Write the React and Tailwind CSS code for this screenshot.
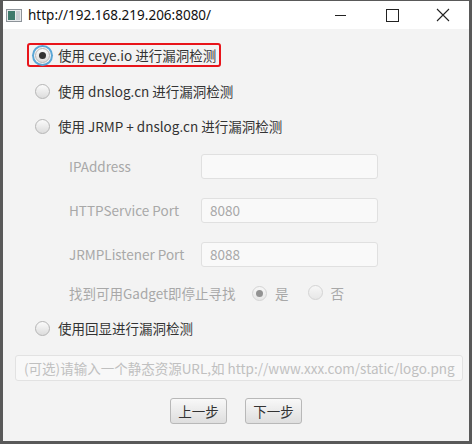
import React from "react";

const font = { fontFamily: '"Noto Sans CJK SC", sans-serif' };

function Radio({ checked, focused, dim }) {
  return (
    <span className={`relative inline-flex items-center justify-center w-[17px] h-[17px] rounded-full shrink-0 ${focused ? "ring-[2px] ring-[#5aa6d6]" : ""} ${dim ? "opacity-50" : ""}`}>
      <span className="w-[15px] h-[15px] rounded-full border border-[#b5b5b5] bg-gradient-to-b from-[#fbfbfb] to-[#dcdcdc] flex items-center justify-center">
        {checked && <span className="w-[7px] h-[7px] rounded-full bg-[#333]" />}
      </span>
    </span>
  );
}

function Field({ label, value }) {
  return (
    <div className="flex items-center h-[25px]">
      <span className="w-[132px] text-[13.5px] text-[#a8a8a8]">{label}</span>
      <div className="w-[177px] h-[25px] rounded-[3px] border border-[#e0e0e0] bg-[#f9f9f9] px-[8px] flex items-center text-[13.5px] text-[#a8a8a8]">
        {value}
      </div>
    </div>
  );
}

export default function App() {
  return (
    <div className="w-[474px] h-[447px] bg-white" style={font}>
      <div className="w-[472px] h-[444px] border-x-[3px] border-t border-b-[3px] border-[#595959] flex flex-col">
        {/* Title bar */}
        <div className="h-[28px] bg-white flex items-center shrink-0">
          <svg width="16" height="13" viewBox="0 0 16 13" className="ml-[3px]">
            <rect x="0.5" y="0.5" width="15" height="12" fill="#e8eaec" stroke="#8d9399" />
            <rect x="2" y="2" width="7" height="9" fill="#3f7a6c" />
            <rect x="10" y="2" width="4" height="9" fill="#c9ced3" />
          </svg>
          <span className="ml-[6px] text-[13.5px] text-[#111]" style={{ fontFamily: '"Noto Sans", sans-serif' }}>http://192.168.219.206:8080/</span>
          <div className="ml-auto flex items-center">
            <svg width="50" height="28" viewBox="0 0 50 28"><line x1="18" y1="14.5" x2="29" y2="14.5" stroke="#222" strokeWidth="1" /></svg>
            <svg width="50" height="28" viewBox="0 0 50 28"><rect x="19.5" y="8.5" width="12" height="12" fill="none" stroke="#222" strokeWidth="1" /></svg>
            <svg width="52" height="28" viewBox="0 0 52 28"><path d="M20 8 L32 20 M32 8 L20 20" stroke="#222" strokeWidth="1.1" /></svg>
          </div>
        </div>

        {/* Content */}
        <div className="flex-1 bg-[#f3f3f3] flex flex-col pt-[14px] whitespace-nowrap">
          <div className="ml-[24px] w-[194px] h-[24px] border-[2px] border-[#e8141a] rounded-[3px] flex items-center pl-[5px] gap-[7px]">
            <Radio checked focused />
            <span className="text-[13.5px] text-[#333]">使用 ceye.io 进行漏洞检测</span>
          </div>
          <div className="ml-[31px] mt-[12px] h-[24px] flex items-center gap-[7px]">
            <Radio />
            <span className="text-[13.5px] text-[#333]">使用 dnslog.cn 进行漏洞检测</span>
          </div>
          <div className="ml-[31px] mt-[11px] h-[24px] flex items-center gap-[7px]">
            <Radio />
            <span className="text-[13.5px] text-[#333]">使用 JRMP + dnslog.cn 进行漏洞检测</span>
          </div>

          <div className="ml-[66px] mt-[16px] flex flex-col gap-[19px]">
            <Field label="IPAddress" value="" />
            <Field label="HTTPService Port" value="8080" />
            <Field label="JRMPListener Port" value="8088" />
            <div className="flex items-center h-[24px] -mt-[5px]">
              <span className="w-[182px] text-[13.5px] text-[#a8a8a8]">找到可用Gadget即停止寻找</span>
              <Radio checked dim />
              <span className="ml-[7px] text-[13.5px] text-[#a8a8a8]">是</span>
              <span className="ml-[18px]"><Radio dim /></span>
              <span className="ml-[7px] text-[13.5px] text-[#a8a8a8]">否</span>
            </div>
          </div>

          <div className="ml-[31px] mt-[11px] h-[24px] flex items-center gap-[7px]">
            <Radio />
            <span className="text-[13.5px] text-[#333]">使用回显进行漏洞检测</span>
          </div>

          <div className="ml-[12px] mt-[15px] w-[448px] h-[26px] rounded-[3px] border border-[#e2e2e2] bg-[#f8f8f8] px-[8px] flex items-center text-[13.5px] text-[#c0c0c0] overflow-hidden">
            (可选)请输入一个静态资源URL,如 http://www.xxx.com/static/logo.png
          </div>

          <div className="mt-[17px] flex justify-center gap-[18px]">
            <button className="w-[57px] h-[26px] rounded-[3px] border border-[#b8b8b8] bg-gradient-to-b from-[#f8f8f8] to-[#dedede] text-[13.5px] text-[#333]">上一步</button>
            <button className="w-[57px] h-[26px] rounded-[3px] border border-[#b8b8b8] bg-gradient-to-b from-[#f8f8f8] to-[#dedede] text-[13.5px] text-[#333]">下一步</button>
          </div>
        </div>
      </div>
    </div>
  );
}
